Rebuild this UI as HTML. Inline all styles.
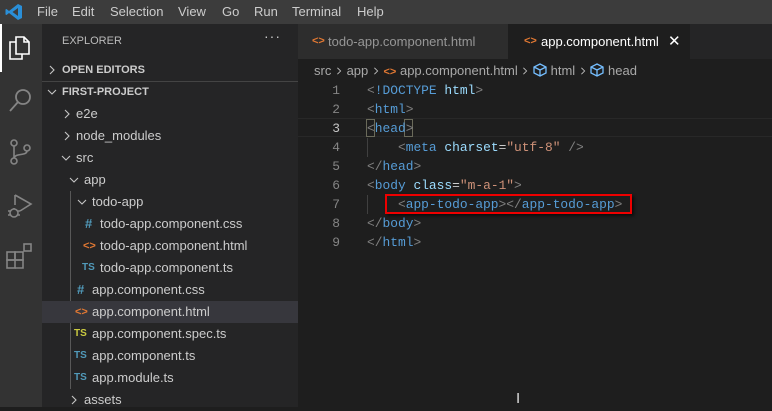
<!DOCTYPE html>
<html><head><style>
*{margin:0;padding:0;box-sizing:border-box}
body{width:772px;height:407px;overflow:hidden;background:#1e1e1e;font-family:"Liberation Sans",sans-serif;font-size:13px;color:#ccc;position:relative}
.abs{position:absolute}
#title{left:0;top:0;width:772px;height:24px;background:#3c3c3c}
#title span{position:absolute;top:4px;font-size:13px;color:#ccc}
#act{left:0;top:24px;width:42px;height:383px;background:#333}
#side{left:42px;top:24px;width:256px;height:383px;background:#252526}
.row{position:absolute;left:0;width:256px;height:22px;line-height:22px;white-space:nowrap;color:#ccc}
.cr,.cd{position:absolute;top:6px;width:10px;height:10px}
#tabs{left:298px;top:24px;width:474px;height:35px;background:#252526}
.code{font-family:"Liberation Mono",monospace;font-size:12.9px;position:absolute;white-space:pre;line-height:19px}
.t{color:#569cd6}.a{color:#9cdcfe}.s{color:#ce9178}.p{color:#808080}
.ln{position:absolute;width:30px;text-align:right;color:#858585;font-family:"Liberation Mono",monospace;font-size:12.9px;line-height:19px}
</style></head><body>
<svg width="0" height="0" style="position:absolute"><defs>
<symbol id="r" viewBox="0 0 10 10"><path d="M3 1 L7 5 L3 9" fill="none" stroke="#c5c5c5" stroke-width="1.1"/></symbol>
<symbol id="d" viewBox="0 0 10 10"><path d="M1 3 L5 7 L9 3" fill="none" stroke="#c5c5c5" stroke-width="1.1"/></symbol>
<symbol id="cube" viewBox="0 0 14 14"><path d="M7 1 L13 4 V10 L7 13 L1 10 V4 Z M1 4 L7 7 L13 4 M7 7 V13" fill="none" stroke="#75beff" stroke-width="1.3"/></symbol>
</defs></svg>
<div id="title" class="abs">
<svg class="abs" style="left:5px;top:3px" width="18" height="18" viewBox="0 0 18 18"><path d="M13 1 L17 3 V15 L13 17 L4 10 L1.5 12 L0.5 11.5 V6.5 L1.5 6 L4 8 Z M13 5 L7.5 9 L13 13 Z" fill="#2a8fd8" fill-rule="evenodd"/></svg>
<span style="left:37px">File</span><span style="left:72px">Edit</span><span style="left:110px">Selection</span><span style="left:178px">View</span><span style="left:222px">Go</span><span style="left:254px">Run</span><span style="left:292px">Terminal</span><span style="left:357px">Help</span>
</div>
<div id="act" class="abs">
<div class="abs" style="left:0;top:0;width:2px;height:48px;background:#fff"></div>
<svg class="abs" style="left:7px;top:10px" width="28" height="28" viewBox="0 0 28 28" fill="none" stroke="#fff" stroke-width="1.6"><path d="M9 8 H3 V25 H15 V20"/><path d="M9 3 H17 L22 8 V20 H9 Z"/><path d="M17 3 V8 H22"/></svg>
<svg class="abs" style="left:7px;top:62px" width="28" height="28" viewBox="0 0 28 28" fill="none" stroke="#858585" stroke-width="1.8"><circle cx="16" cy="11" r="7"/><path d="M11 16 L3 25"/></svg>
<svg class="abs" style="left:7px;top:114px" width="28" height="28" viewBox="0 0 28 28" fill="none" stroke="#858585" stroke-width="1.6"><circle cx="7" cy="5" r="3"/><circle cx="7" cy="23" r="3"/><circle cx="20" cy="10" r="3"/><path d="M7 8 V20 M20 13 C20 18 8 15 7 20"/></svg>
<svg class="abs" style="left:5px;top:168px" width="30" height="30" viewBox="0 0 30 30" fill="none" stroke="#858585" stroke-width="1.6"><path d="M10 3 L26 12 L15 19"/><path d="M10 3 V13"/><circle cx="9" cy="21" r="4"/><path d="M3 19 H5 M3 23 H5 M13 19 H15 M13 23 H15 M9 16 V17"/></svg>
<svg class="abs" style="left:5px;top:218px" width="30" height="30" viewBox="0 0 30 30" fill="none" stroke="#858585" stroke-width="1.6"><rect x="2" y="10" width="8" height="8"/><rect x="10" y="10" width="8" height="8"/><rect x="2" y="18" width="8" height="8"/><path d="M10 18 H18 V26 H10"/><rect x="19" y="2" width="7" height="7"/></svg>
</div>
<div id="side" class="abs">
<div class="abs" style="left:20px;top:11px;font-size:11px;color:#bbb">EXPLORER</div>
<div class="abs" style="left:222px;top:4px;font-size:14px;color:#ccc;letter-spacing:1px">···</div>
<div class="row" style="top:35px;font-weight:bold;font-size:11px"><svg class="cr" style="left:5px"><use href="#r"/></svg><span style="position:absolute;left:20px">OPEN EDITORS</span></div>
<div class="abs" style="left:0;top:57px;width:256px;height:1px;background:#444"></div>
<div class="row" style="top:57px;font-weight:bold;font-size:11px"><svg class="cd" style="left:5px"><use href="#d"/></svg><span style="position:absolute;left:20px">FIRST-PROJECT</span></div>
<div class="row" style="top:79px"><svg class="cr" style="left:20px"><use href="#r"/></svg><span style="position:absolute;left:34px">e2e</span></div>
<div class="row" style="top:101px"><svg class="cr" style="left:20px"><use href="#r"/></svg><span style="position:absolute;left:34px">node_modules</span></div>
<div class="row" style="top:123px"><svg class="cd" style="left:19px"><use href="#d"/></svg><span style="position:absolute;left:34px">src</span></div>
<div class="row" style="top:145px"><svg class="cd" style="left:27px"><use href="#d"/></svg><span style="position:absolute;left:42px">app</span></div>
<div class="abs" style="left:28px;top:167px;width:1px;height:198px;background:#585858"></div>
<div class="row" style="top:167px"><svg class="cd" style="left:35px"><use href="#d"/></svg><span style="position:absolute;left:50px">todo-app</span></div>
<div class="row" style="top:189px"><span style="position:absolute;left:43px;color:#519aba;font-weight:bold">#</span><span style="position:absolute;left:58px">todo-app.component.css</span></div>
<div class="row" style="top:211px"><span style="position:absolute;left:41px;color:#e37933;font-weight:bold;font-size:11px">&lt;&gt;</span><span style="position:absolute;left:58px">todo-app.component.html</span></div>
<div class="row" style="top:233px"><span style="position:absolute;left:40px;color:#519aba;font-weight:bold;font-size:10px">TS</span><span style="position:absolute;left:58px">todo-app.component.ts</span></div>
<div class="row" style="top:255px"><span style="position:absolute;left:35px;color:#519aba;font-weight:bold">#</span><span style="position:absolute;left:50px">app.component.css</span></div>
<div class="row" style="top:277px;background:#37373d"><span style="position:absolute;left:33px;color:#e37933;font-weight:bold;font-size:11px">&lt;&gt;</span><span style="position:absolute;left:50px">app.component.html</span></div>
<div class="row" style="top:299px"><span style="position:absolute;left:32px;color:#cbcb41;font-weight:bold;font-size:10px">TS</span><span style="position:absolute;left:50px">app.component.spec.ts</span></div>
<div class="row" style="top:321px"><span style="position:absolute;left:32px;color:#519aba;font-weight:bold;font-size:10px">TS</span><span style="position:absolute;left:50px">app.component.ts</span></div>
<div class="row" style="top:343px"><span style="position:absolute;left:32px;color:#519aba;font-weight:bold;font-size:10px">TS</span><span style="position:absolute;left:50px">app.module.ts</span></div>
<div class="row" style="top:365px"><svg class="cr" style="left:27px"><use href="#r"/></svg><span style="position:absolute;left:42px">assets</span></div>
</div>
<div id="tabs" class="abs">
<div class="abs" style="left:0;top:0;width:210px;height:35px;background:#2d2d2d;line-height:35px;color:#969696"><span style="position:absolute;left:14px;color:#e37933;font-size:11px;font-weight:bold">&lt;&gt;</span><span style="position:absolute;left:30px">todo-app.component.html</span></div>
<div class="abs" style="left:210px;top:0;width:182px;height:35px;background:#1e1e1e;line-height:35px;color:#fff"><span style="position:absolute;left:16px;color:#e37933;font-size:11px;font-weight:bold">&lt;&gt;</span><span style="position:absolute;left:33px">app.component.html</span><span style="position:absolute;left:160px;font-size:15px">✕</span></div>
</div>
<div class="abs" style="left:314px;top:63px;color:#a9a9a9;white-space:nowrap">src <svg width="8" height="10" style="vertical-align:-1px"><use href="#r"/></svg> app <svg width="8" height="10" style="vertical-align:-1px"><use href="#r"/></svg> <span style="color:#e37933;font-size:11px;font-weight:bold">&lt;&gt;</span> app.component.html <svg width="8" height="10" style="vertical-align:-1px"><use href="#r"/></svg> <svg width="14" height="14" style="vertical-align:-2px"><use href="#cube"/></svg> html <svg width="8" height="10" style="vertical-align:-1px"><use href="#r"/></svg> <svg width="14" height="14" style="vertical-align:-2px"><use href="#cube"/></svg> head</div>
<div class="abs" style="left:298px;top:118px;width:474px;height:19px;border-top:1px solid #282828;border-bottom:1px solid #282828"></div>
<div class="ln" style="left:310px;top:81px">1<br>2<br><span style="color:#c6c6c6">3</span><br>4<br>5<br>6<br>7<br>8<br>9</div>
<div class="abs" style="left:367px;top:138px;width:1px;height:19px;background:#404040"></div>
<div class="abs" style="left:367px;top:195px;width:1px;height:19px;background:#404040"></div>
<div class="abs" style="left:366px;top:119px;width:9px;height:18px;border:1px solid #6a6a5a"></div>
<div class="abs" style="left:404px;top:119px;width:9px;height:18px;border:1px solid #6a6a5a"></div>
<div class="code" style="left:367px;top:81px"><span class="p">&lt;</span><span class="t">!DOCTYPE</span> <span class="a">html</span><span class="p">&gt;</span>
<span class="p">&lt;</span><span class="t">html</span><span class="p">&gt;</span>
<span class="p">&lt;</span><span class="t">head</span><span class="p">&gt;</span>
    <span class="p">&lt;</span><span class="t">meta</span> <span class="a">charset</span>=<span class="s">"utf-8"</span> <span class="p">/&gt;</span>
<span class="p">&lt;/</span><span class="t">head</span><span class="p">&gt;</span>
<span class="p">&lt;</span><span class="t">body</span> <span class="a">class</span>=<span class="s">"m-a-1"</span><span class="p">&gt;</span>
    <span class="p">&lt;</span><span class="t">app-todo-app</span><span class="p">&gt;&lt;/</span><span class="t">app-todo-app</span><span class="p">&gt;</span>
<span class="p">&lt;/</span><span class="t">body</span><span class="p">&gt;</span>
<span class="p">&lt;/</span><span class="t">html</span><span class="p">&gt;</span></div>
<div class="abs" style="left:385px;top:194px;width:247px;height:20px;border:2px solid #e00;box-shadow:2px 2px 3px rgba(0,0,0,.6)"></div>
<div class="abs" style="left:516px;top:390px;color:#ddd;font-size:15px">I</div>
</body></html>
